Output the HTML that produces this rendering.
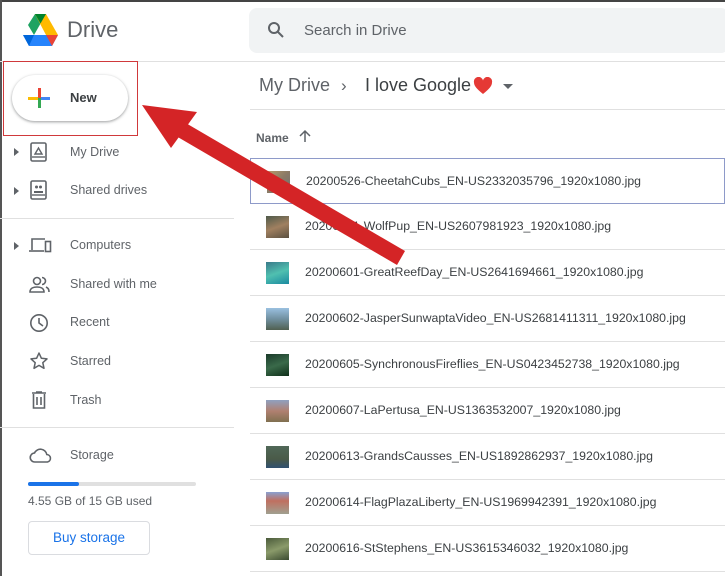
<!DOCTYPE html>
<html><head><meta charset="utf-8"><style>
*{margin:0;padding:0;box-sizing:border-box}
body{width:725px;height:576px;overflow:hidden;background:#fff;font-family:"Liberation Sans",Arial,sans-serif;position:relative;color:#3c4043}
.abs{position:absolute}
.nav{position:absolute;left:70px;font-size:12.5px;color:#5f6368}
.ic{position:absolute;left:29px}
.tri{position:absolute;left:14px;width:0;height:0;border-top:4px solid transparent;border-bottom:4px solid transparent;border-left:5px solid #5f6368}
.row{position:absolute;left:250px;width:475px;height:46px;border-bottom:1px solid #e0e0e0}
.row .th{position:absolute;left:16px;top:12px;width:23px;height:22px}
.row .t{position:absolute;left:55px;top:15px;font-size:12.3px;color:#3c4043;white-space:nowrap}
</style></head><body>
<div class="abs" style="left:0;top:0;width:725px;height:2px;background:#444"></div>
<div class="abs" style="left:0;top:0;width:2px;height:576px;background:#555"></div>
<svg class="abs" style="left:23px;top:14px" width="35" height="32" viewBox="0 0 35 32">
<polygon points="12,0 23,0 11,21 5,11" fill="#1ea362"/>
<polygon points="23,0 35,21 23,21 12,0" fill="#ffba00"/>
<polygon points="0,21 11,21 35,21 29,32 6,32" fill="#2684fc"/>
<polygon points="12,0 23,0 17.5,9.5" fill="#00832d"/>
<polygon points="23,21 35,21 29,32" fill="#ea4335"/>
<polygon points="0,21 11,21 6,32" fill="#0066da"/>
</svg>
<div class="abs" style="left:67px;top:17px;font-size:22px;color:#5f6368">Drive</div>
<div class="abs" style="left:249px;top:8px;width:480px;height:45px;background:#f1f3f4;border-radius:8px"></div>
<svg class="abs" style="left:267px;top:21px" width="18" height="18" viewBox="0 0 18 18"><circle cx="7" cy="7" r="5" fill="none" stroke="#5f6368" stroke-width="2"/><line x1="11" y1="11" x2="16" y2="16" stroke="#5f6368" stroke-width="2"/></svg>
<div class="abs" style="left:304px;top:22px;font-size:15px;color:#5f6368">Search in Drive</div>
<div class="abs" style="left:0;top:61px;width:725px;height:1px;background:#e0e0e0"></div>
<div class="abs" style="left:3px;top:61px;width:135px;height:75px;border:1.5px solid #d0393b"></div>
<div class="abs" style="left:12px;top:75px;width:116px;height:46px;border-radius:23px;background:#fff;box-shadow:0 1px 3px rgba(60,64,67,.35),0 1px 2px rgba(60,64,67,.2)"></div>
<svg class="abs" style="left:27px;top:86px" width="24" height="24" viewBox="0 0 24 24"><rect x="11" y="2" width="3" height="10" fill="#ea4335"/><rect x="11" y="12" width="3" height="10" fill="#34a853"/><rect x="1" y="11" width="10" height="3" fill="#fbbc04"/><rect x="14" y="11" width="9" height="3" fill="#4285f4"/></svg>
<div class="abs" style="left:70px;top:90px;font-size:13px;font-weight:bold;color:#3c4043">New</div>
<div class="tri" style="top:148px"></div>
<svg class="ic" style="top:142px" width="20" height="20" viewBox="0 0 20 20"><rect x="2" y="1" width="15" height="18" rx="1.5" fill="none" stroke="#5f6368" stroke-width="1.6"/><path d="M6 12 L9.5 6 L13 12Z" fill="none" stroke="#5f6368" stroke-width="1.4"/><line x1="3" y1="15" x2="16" y2="15" stroke="#5f6368" stroke-width="1.4"/></svg>
<div class="nav" style="top:145px">My Drive</div>
<div class="tri" style="top:187px"></div>
<svg class="ic" style="top:180px" width="20" height="20" viewBox="0 0 20 20"><rect x="2" y="1" width="15" height="18" rx="1.5" fill="none" stroke="#5f6368" stroke-width="1.6"/><circle cx="7.5" cy="7" r="1.5" fill="#5f6368"/><circle cx="11.5" cy="7" r="1.5" fill="#5f6368"/><path d="M5 12h9" stroke="#5f6368" stroke-width="2"/><line x1="3" y1="15" x2="16" y2="15" stroke="#5f6368" stroke-width="1.4"/></svg>
<div class="nav" style="top:183px">Shared drives</div>
<div class="abs" style="left:0;top:218px;width:234px;height:1px;background:#e0e0e0"></div>
<div class="tri" style="top:242px"></div>
<svg class="ic" style="top:236px" width="24" height="18" viewBox="0 0 24 18"><path d="M3 14V3h13" fill="none" stroke="#5f6368" stroke-width="1.6"/><line x1="0" y1="15" x2="15" y2="15" stroke="#5f6368" stroke-width="1.6"/><rect x="16.5" y="5.5" width="5" height="10" fill="none" stroke="#5f6368" stroke-width="1.6"/></svg>
<div class="nav" style="top:238px">Computers</div>
<svg class="ic" style="top:275px" width="22" height="20" viewBox="0 0 22 20"><circle cx="8" cy="6" r="3.5" fill="none" stroke="#5f6368" stroke-width="1.6"/><path d="M1 17c0-4 4-5 7-5s7 1 7 5z" fill="none" stroke="#5f6368" stroke-width="1.6"/><path d="M13 2.5a3.5 3.5 0 0 1 0 7M17 12c2 1 3 2 3 5" fill="none" stroke="#5f6368" stroke-width="1.6"/></svg>
<div class="nav" style="top:277px">Shared with me</div>
<svg class="ic" style="top:313px" width="20" height="20" viewBox="0 0 20 20"><circle cx="10" cy="10" r="8.2" fill="none" stroke="#5f6368" stroke-width="1.6"/><path d="M10 5v5l4 3" fill="none" stroke="#5f6368" stroke-width="1.6"/></svg>
<div class="nav" style="top:315px">Recent</div>
<svg class="ic" style="top:351px" width="20" height="20" viewBox="0 0 20 20"><path d="M10 2l2.4 5.3 5.6.6-4.2 3.8 1.2 5.6L10 14.4 5 17.3l1.2-5.6L2 7.9l5.6-.6z" fill="none" stroke="#5f6368" stroke-width="1.5" stroke-linejoin="round"/></svg>
<div class="nav" style="top:354px">Starred</div>
<svg class="ic" style="top:390px" width="20" height="20" viewBox="0 0 20 20"><path d="M3 3h14M7 2h6M4.5 4v14h11V4" fill="none" stroke="#5f6368" stroke-width="1.6"/><path d="M8 7v8M12 7v8" stroke="#5f6368" stroke-width="1.6"/></svg>
<div class="nav" style="top:393px">Trash</div>
<div class="abs" style="left:0;top:427px;width:234px;height:1px;background:#e0e0e0"></div>
<svg class="ic" style="top:446px" width="24" height="18" viewBox="0 0 24 18"><path d="M6 16a4.5 4.5 0 0 1 -.5-9 6.5 6.5 0 0 1 12.3 1.5A3.8 3.8 0 0 1 18.5 16z" fill="none" stroke="#5f6368" stroke-width="1.6"/></svg>
<div class="nav" style="top:448px">Storage</div>
<div class="abs" style="left:28px;top:482px;width:168px;height:4px;background:#e0e0e0;border-radius:2px"></div>
<div class="abs" style="left:28px;top:482px;width:51px;height:4px;background:#1a73e8;border-radius:2px"></div>
<div class="abs" style="left:28px;top:494px;font-size:12px;color:#5f6368">4.55 GB of 15 GB used</div>
<div class="abs" style="left:28px;top:521px;width:122px;height:34px;border:1px solid #dadce0;border-radius:4px;color:#1a73e8;font-size:13.5px;text-align:center;line-height:32px">Buy storage</div>
<div class="abs" style="left:259px;top:75px;font-size:18px;color:#5f6368">My Drive</div>
<div class="abs" style="left:341px;top:76px;font-size:17px;color:#5f6368">&#8250;</div>
<div class="abs" style="left:365px;top:75px;font-size:18px;color:#3c4043">I love Google</div>
<svg class="abs" style="left:473px;top:77px" width="20" height="18" viewBox="0 0 20 18"><path d="M10 17C4 12 1 9 1 5.5A4.5 4.5 0 0 1 10 3.5 4.5 4.5 0 0 1 19 5.5C19 9 16 12 10 17z" fill="#e53935"/></svg>
<div class="abs" style="left:503px;top:84px;width:0;height:0;border-left:5px solid transparent;border-right:5px solid transparent;border-top:5px solid #5f6368"></div>
<div class="abs" style="left:250px;top:109px;width:475px;height:1px;background:#e0e0e0"></div>
<div class="abs" style="left:256px;top:131px;font-size:12px;font-weight:bold;color:#5f6368">Name</div>
<svg class="abs" style="left:298px;top:129px" width="14" height="14" viewBox="0 0 14 14"><path d="M7 13V2M2 7l5-5 5 5" fill="none" stroke="#5f6368" stroke-width="1.5"/></svg>
<div class="row" style="top:158px;border:1px solid #8e9ac9;height:46px"><div class="th" style="background:linear-gradient(135deg,#b89a6a,#8a7a66 50%,#6e7070)"></div><div class="t">20200526-CheetahCubs_EN-US2332035796_1920x1080.jpg</div></div>
<div class="row" style="top:204px"><div class="th" style="background:linear-gradient(160deg,#4e5a4a,#a08060 50%,#5a5040)"></div><div class="t">20200531-WolfPup_EN-US2607981923_1920x1080.jpg</div></div>
<div class="row" style="top:250px"><div class="th" style="background:linear-gradient(160deg,#3a7a8a,#50c0b0 50%,#1a8aa0)"></div><div class="t">20200601-GreatReefDay_EN-US2641694661_1920x1080.jpg</div></div>
<div class="row" style="top:296px"><div class="th" style="background:linear-gradient(180deg,#9ac0e0,#7090a0 50%,#506050)"></div><div class="t">20200602-JasperSunwaptaVideo_EN-US2681411311_1920x1080.jpg</div></div>
<div class="row" style="top:342px"><div class="th" style="background:linear-gradient(160deg,#1a3a2a,#3a6a4a 50%,#10301a)"></div><div class="t">20200605-SynchronousFireflies_EN-US0423452738_1920x1080.jpg</div></div>
<div class="row" style="top:388px"><div class="th" style="background:linear-gradient(180deg,#90a0c0,#b08070 50%,#807050)"></div><div class="t">20200607-LaPertusa_EN-US1363532007_1920x1080.jpg</div></div>
<div class="row" style="top:434px"><div class="th" style="background:linear-gradient(180deg,#506858,#4a5a48 60%,#305070)"></div><div class="t">20200613-GrandsCausses_EN-US1892862937_1920x1080.jpg</div></div>
<div class="row" style="top:480px"><div class="th" style="background:linear-gradient(180deg,#8aa0d0,#c07060 40%,#a0a090)"></div><div class="t">20200614-FlagPlazaLiberty_EN-US1969942391_1920x1080.jpg</div></div>
<div class="row" style="top:526px"><div class="th" style="background:linear-gradient(160deg,#4a5a3a,#8a9a6a 50%,#3a4a30)"></div><div class="t">20200616-StStephens_EN-US3615346032_1920x1080.jpg</div></div>
<svg class="abs" style="left:0;top:0" width="725" height="576" viewBox="0 0 725 576">
<polygon points="184,122 405,251 397,265 176,136" fill="#d42426"/>
<polygon points="142,105 197,112 171,148" fill="#d42426"/>
</svg>
</body></html>
